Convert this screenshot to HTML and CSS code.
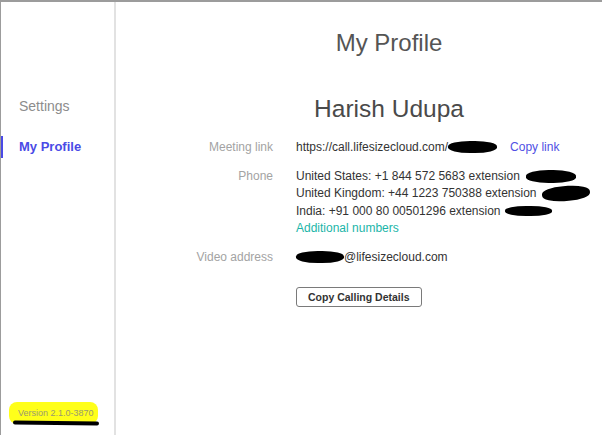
FILE: index.html
```html
<!DOCTYPE html>
<html>
<head>
<meta charset="utf-8">
<link rel="stylesheet" href="styles.css">
</head>
<body>
<div class="window">
  <aside class="sidebar">
    <nav class="nav">
      <div class="nav-item">Settings</div>
      <div class="nav-item active">My Profile</div>
    </nav>
    <div class="version-block">
      <span class="version">Version 2.1.0-3870</span>
      <div class="scribble"></div>
    </div>
  </aside>
  <main class="main">
    <header class="header">
      <h1 class="title">My Profile</h1>
      <h2 class="name">Harish Udupa</h2>
    </header>
    <section class="details">
      <div class="label">Meeting link</div>
      <div class="value">https://call.lifesizecloud.com/<span class="redact r-link"></span><a class="copy-link">Copy link</a></div>

      <div class="label">Phone</div>
      <div class="value">
        <div>United States: +1 844 572 5683 extension <span class="redact r-us"></span></div>
        <div>United Kingdom: +44 1223 750388 extension <span class="redact r-uk"></span></div>
        <div>India: +91 000 80 00501296 extension <span class="redact r-in"></span></div>
        <div class="more">Additional numbers</div>
      </div>

      <div class="label">Video address</div>
      <div class="value"><span class="redact r-video"></span>@lifesizecloud.com</div>

      <div class="label"></div>
      <div class="value"><button class="copy-btn">Copy Calling Details</button></div>
    </section>
  </main>
</div>
</body>
</html>
```

FILE: styles.css
```css
html, body {
  margin: 0;
  padding: 0;
  background: #fff;
}
body {
  font-family: "Liberation Sans", Arial, sans-serif;
}
.window {
  width: 602px;
  height: 435px;
  box-sizing: border-box;
  border-top: 2px solid #9c9c9c;
  border-left: 1px solid #9c9c9c;
  display: flex;
  overflow: hidden;
}
.sidebar {
  width: 113px;
  flex: none;
  border-right: 2px solid #e2e2e2;
  display: flex;
  flex-direction: column;
}
.nav {
  padding-top: 93px;
  display: flex;
  flex-direction: column;
  gap: 19px;
}
.nav-item {
  height: 22px;
  line-height: 22px;
  padding-left: 18px;
  font-size: 14px;
  color: #8c8c8c;
}
.nav-item.active {
  padding-left: 16px;
  border-left: 2px solid #4a4ae6;
  color: #4a4ae6;
  font-weight: bold;
  font-size: 13px;
}
.version-block {
  margin-top: auto;
  padding: 0 0 10px 8px;
}
.version {
  display: inline-block;
  background: #ffff1a;
  color: #9a9a70;
  font-size: 9px;
  line-height: 12px;
  padding: 5px 4px 5px 9px;
  border-radius: 8px;
}
.scribble {
  width: 86px;
  height: 4px;
  margin: -3px 0 0 4px;
  background: #000;
  border-radius: 3px;
  transform: rotate(0.8deg);
}
.main {
  flex: 1;
}
.header {
  padding-left: 60px;
  text-align: center;
}
.title {
  margin: 27px 0 0;
  font-size: 24px;
  line-height: 28px;
  font-weight: normal;
  color: #555;
}
.name {
  margin: 38px 0 0;
  font-size: 24.5px;
  line-height: 28px;
  font-weight: normal;
  color: #4a4a4a;
}
.details {
  margin-top: 16px;
  display: grid;
  grid-template-columns: 157px 1fr;
  column-gap: 23px;
  row-gap: 11px;
  font-size: 12px;
  line-height: 17.5px;
}
.label {
  text-align: right;
  color: #a3a3a3;
}
.value {
  color: #333;
  white-space: nowrap;
}
.redact {
  display: inline-block;
  background: #000;
  vertical-align: middle;
  border-radius: 45%;
}
.r-link { width: 49px; height: 12px; margin-top: -2px; }
.r-us { width: 50px; height: 13px; margin-left: 3px; }
.r-uk { width: 48px; height: 15px; margin-left: 2px; transform: rotate(-4deg); }
.r-in { width: 47px; height: 10px; margin-left: 1px; }
.r-video { width: 48px; height: 12px; }
.copy-link {
  margin-left: 13px;
  color: #5050e4;
}
.more {
  color: #1bb5a8;
}
.copy-btn {
  margin-top: 10px;
  height: 20px;
  padding: 0 11px;
  border: 1px solid #7a7a7a;
  border-radius: 3px;
  background: #fff;
  color: #333;
  font-family: "Liberation Sans", Arial, sans-serif;
  font-weight: bold;
  font-size: 10.5px;
}
```
